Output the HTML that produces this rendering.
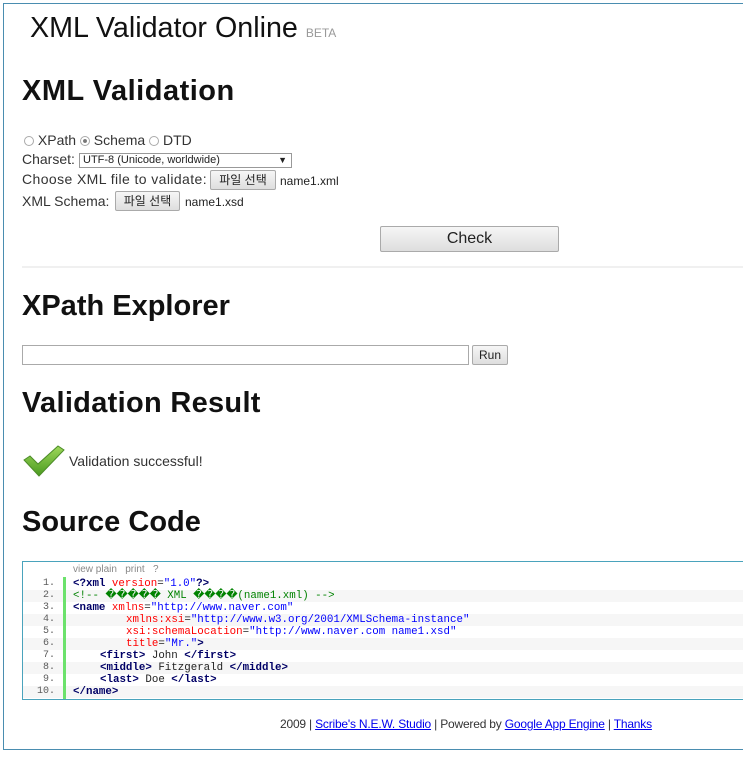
<!DOCTYPE html>
<html><head><meta charset="utf-8">
<style>
*{margin:0;padding:0;box-sizing:border-box}
body{width:743px;height:757px;background:#fff;position:relative;overflow:hidden;font-family:"Liberation Sans","Noto Sans CJK KR",sans-serif;color:#222}
.frame{position:absolute;left:3px;top:3px;width:760px;height:747px;border:1px solid #4a8db0}
.a{position:absolute;white-space:nowrap}
.h2{font-size:29px;font-weight:bold;letter-spacing:0;color:#111}
.t{font-size:14px;color:#333}
.btn{position:absolute;border:1px solid #aaa;background:linear-gradient(#f6f6f6,#dedede);border-radius:2px;font-size:12px;text-align:center;color:#222}
.code{position:absolute;left:22px;top:561px;width:730px;height:139px;border:1px solid #4aa3bc;font-family:"Liberation Mono",monospace;font-size:10.8px}
.row{position:absolute;left:0;width:730px;height:12px;line-height:12px}
.row .n{position:absolute;left:0;width:32px;text-align:right;color:#5c5c5c;font-size:10px}
.row .c{position:absolute;left:50px}
.alt{background:#f6f6f6}
.k{color:#006;font-weight:bold}
.at{color:#f00}
.s{color:#00f}
.cm{color:#008200}
a{color:#00e;text-decoration:underline}
</style></head><body>
<div class="frame"></div>
<div class="a" style="left:30px;top:12px;font-size:28.7px;color:#111">XML Validator Online <span style="font-size:12px;color:#999">BETA</span></div>
<div class="a h2" style="left:22px;top:75px;letter-spacing:0.5px">XML Validation</div>
<div class="a t" style="left:24px;top:132px"><span style="display:inline-block;width:10px;height:10px;border:1px solid #aaa;border-radius:50%;vertical-align:-1px"></span> XPath <span style="display:inline-block;width:10px;height:10px;border:1px solid #aaa;border-radius:50%;vertical-align:-1px;background:radial-gradient(#777 30%,#fff 40%)"></span> Schema <span style="display:inline-block;width:10px;height:10px;border:1px solid #aaa;border-radius:50%;vertical-align:-1px"></span> DTD</div>
<div class="a t" style="left:22px;top:151px">Charset:</div>
<div class="a" style="left:79px;top:153px;width:213px;height:15px;border:1px solid #999;font-size:11px;line-height:13px;padding-left:3px">UTF-8 (Unicode, worldwide)<span style="position:absolute;right:4px;font-size:9px">▼</span></div>
<div class="a t" style="left:22px;top:171px;letter-spacing:0.4px">Choose XML file to validate:</div>
<div class="btn" style="left:210px;top:170px;width:66px;height:20px;line-height:18px">파일 선택</div>
<div class="a" style="left:280px;top:174px;font-size:12px">name1.xml</div>
<div class="a t" style="left:22px;top:193px">XML Schema:</div>
<div class="btn" style="left:115px;top:191px;width:65px;height:20px;line-height:18px">파일 선택</div>
<div class="a" style="left:185px;top:195px;font-size:12px">name1.xsd</div>
<div class="btn" style="left:380px;top:226px;width:179px;height:26px;line-height:24px;font-size:16px">Check</div>
<div class="a" style="left:22px;top:266px;width:730px;height:2px;background:#f0f0f0"></div>
<div class="a h2" style="left:22px;top:290px">XPath Explorer</div>
<div class="a" style="left:22px;top:345px;width:447px;height:20px;border:1px solid #aaa"></div>
<div class="btn" style="left:472px;top:345px;width:36px;height:20px;line-height:18px">Run</div>
<div class="a h2" style="left:22px;top:387px;letter-spacing:0.3px">Validation Result</div>
<svg class="a" style="left:22px;top:444px" width="44" height="34" viewBox="0 0 44 34"><defs><linearGradient id="g" x1="0" y1="0" x2="0" y2="1"><stop offset="0" stop-color="#9ed85a"/><stop offset="1" stop-color="#4a9a20"/></linearGradient></defs><path d="M2 16 L8 12 L16 20 L36 2 L42 6 L17 32 Z" fill="url(#g)" stroke="#4c8c28" stroke-width="1"/></svg>
<div class="a t" style="left:69px;top:453px">Validation successful!</div>
<div class="a h2" style="left:22px;top:506px">Source Code</div>
<div class="code">
<div class="a" style="left:50px;top:2px;font-family:'Liberation Sans',sans-serif;font-size:10px;color:#888">view plain &nbsp; print &nbsp; ?</div>
<div class="row" style="top:16px"><span class="n">1.</span><span class="c"><span class="k">&lt;?xml</span> <span class="at">version</span>=<span class="s">"1.0"</span><span class="k">?&gt;</span></span></div>
<div class="row alt" style="top:28px"><span class="n">2.</span><span class="c cm">&lt;!-- ����� XML ����(name1.xml) --&gt;</span></div>
<div class="row" style="top:40px"><span class="n">3.</span><span class="c"><span class="k">&lt;name</span> <span class="at">xmlns</span>=<span class="s">"http://www.naver.com"</span></span></div>
<div class="row alt" style="top:52px"><span class="n">4.</span><span class="c" style="left:103px"><span class="at">xmlns:xsi</span>=<span class="s">"http://www.w3.org/2001/XMLSchema-instance"</span></span></div>
<div class="row" style="top:64px"><span class="n">5.</span><span class="c" style="left:103px"><span class="at">xsi:schemaLocation</span>=<span class="s">"http://www.naver.com name1.xsd"</span></span></div>
<div class="row alt" style="top:76px"><span class="n">6.</span><span class="c" style="left:103px"><span class="at">title</span>=<span class="s">"Mr."</span><span class="k">&gt;</span></span></div>
<div class="row" style="top:88px"><span class="n">7.</span><span class="c" style="left:77px"><span class="k">&lt;first&gt;</span> John <span class="k">&lt;/first&gt;</span></span></div>
<div class="row alt" style="top:100px"><span class="n">8.</span><span class="c" style="left:77px"><span class="k">&lt;middle&gt;</span> Fitzgerald <span class="k">&lt;/middle&gt;</span></span></div>
<div class="row" style="top:112px"><span class="n">9.</span><span class="c" style="left:77px"><span class="k">&lt;last&gt;</span> Doe <span class="k">&lt;/last&gt;</span></span></div>
<div class="row alt" style="top:124px"><span class="n">10.</span><span class="c"><span class="k">&lt;/name&gt;</span></span></div>
<div class="a" style="left:40px;top:15px;width:3px;height:122px;background:#6ce26c"></div>
</div>
<div class="a" style="left:280px;top:717px;font-size:12px;color:#333;letter-spacing:-0.2px">2009 | <a>Scribe's N.E.W. Studio</a> | Powered by <a>Google App Engine</a> | <a>Thanks</a></div>
</body></html>
